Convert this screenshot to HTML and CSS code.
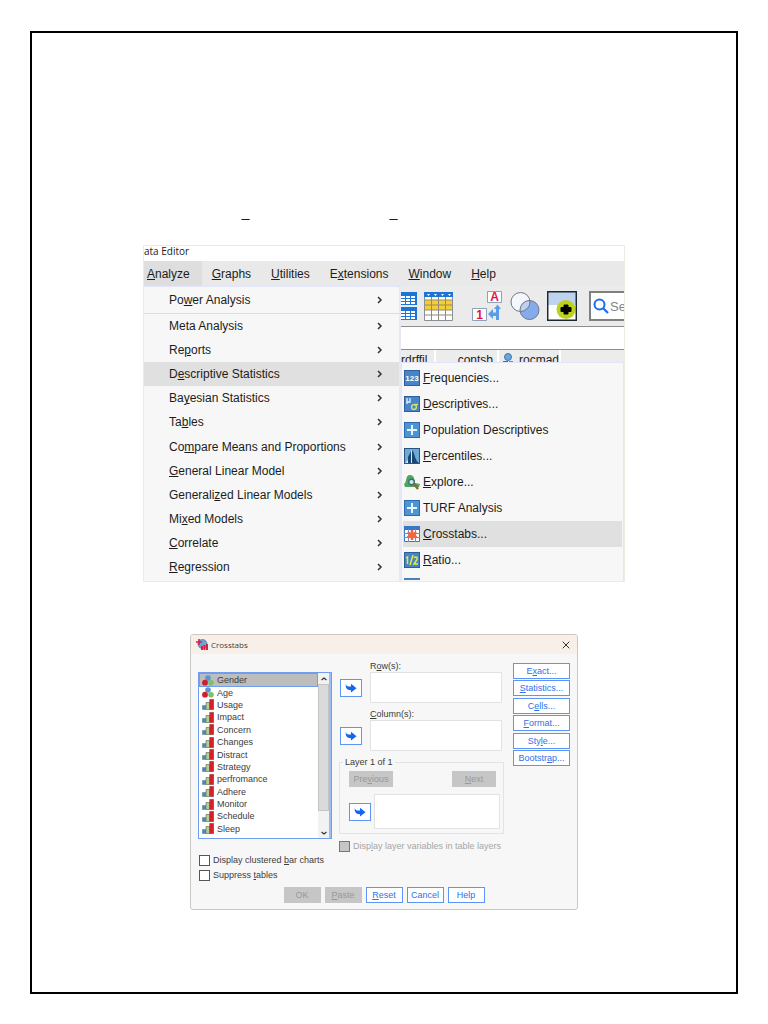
FILE: index.html
```html
<!DOCTYPE html>
<html lang="en">
<head>
<meta charset="utf-8">
<meta name="viewport" content="width=device-width, initial-scale=1">
<title>Crosstabs</title>
<link rel="stylesheet" href="styles.css">
</head>
<body>
<svg class="defs" aria-hidden="true">
  <symbol id="chev" viewBox="0 0 8 8"><path d="M2 1l3 3-3 3" fill="none" stroke="#333" stroke-width="1.5"/></symbol>
  <symbol id="plus" viewBox="0 0 16 16"><rect x=".5" y=".5" width="15" height="15" fill="#4c94d4" stroke="#2d69ae"/><path d="M8 3v10M3 8h10" stroke="#e4f4ff" stroke-width="2"/></symbol>
  <symbol id="nominal" viewBox="0 0 12 11"><circle cx="6" cy="3" r="2.8" fill="#5b94d6"/><circle cx="3" cy="7.7" r="2.9" fill="#cf1d2c"/><circle cx="9" cy="7.7" r="2.8" fill="#7fbf68"/></symbol>
  <symbol id="ordinal" viewBox="0 0 12 11"><path d="M.3 6.500h3.700v4H.3z" fill="#4f87b8" stroke="#6c8799" stroke-width=".6"/><path d="M4 3.500h3.500v7H4z" fill="#b4cf98" stroke="#5f7a5f" stroke-width=".7"/><path d="M7.700.5h4v10h-4z" fill="#d91f28" stroke="#8f3034" stroke-width=".6"/></symbol>
  <symbol id="move" viewBox="0 0 12 10"><path d="M.8.800c.2 2.200 1.500 2.900 5.200 2.800V.8L11.500 5.300 6 9.600V7.200C2.200 7.400.2 5 .8.800z" fill="#1265f5"/></symbol>
</svg>
<main class="page">
  <p class="marks"><span>_</span><span>_</span></p>

  <section class="editor">
    <div class="caption">ata Editor</div>
    <nav class="menubar">
      <button class="on"><u>A</u>nalyze</button><button><u>G</u>raphs</button><button><u>U</u>tilities</button><button>E<u>x</u>tensions</button><button><u>W</u>indow</button><button><u>H</u>elp</button>
    </nav>
    <div class="work">
      <div class="menu">
        <button class="first"><span>Po<u>w</u>er Analysis</span><svg><use href="#chev"/></svg></button>
        <button><span>Meta Analysis</span><svg><use href="#chev"/></svg></button>
        <button><span>Re<u>p</u>orts</span><svg><use href="#chev"/></svg></button>
        <button class="on"><span>D<u>e</u>scriptive Statistics</span><svg><use href="#chev"/></svg></button>
        <button><span>Ba<u>y</u>esian Statistics</span><svg><use href="#chev"/></svg></button>
        <button><span>Ta<u>b</u>les</span><svg><use href="#chev"/></svg></button>
        <button><span>Co<u>m</u>pare Means and Proportions</span><svg><use href="#chev"/></svg></button>
        <button><span><u>G</u>eneral Linear Model</span><svg><use href="#chev"/></svg></button>
        <button><span>Generali<u>z</u>ed Linear Models</span><svg><use href="#chev"/></svg></button>
        <button><span>Mi<u>x</u>ed Models</span><svg><use href="#chev"/></svg></button>
        <button><span><u>C</u>orrelate</span><svg><use href="#chev"/></svg></button>
        <button><span><u>R</u>egression</span><svg><use href="#chev"/></svg></button>
      </div>
      <div class="side">
        <div class="toolbar">
          <svg class="t-split" viewBox="0 0 16 30"><path d="M0 1h16v13H0zM0 16h16v13H0z" fill="#1c74d4"/><path d="M0 5h4v2H0zM5 5h4v2H5zM10 5h4v2h-4zM0 8h4v2H0zM5 8h4v2H5zM10 8h4v2h-4zM0 11h4v2H0zM5 11h4v2H5zM10 11h4v2h-4zM0 20h4v2H0zM5 20h4v2H5zM10 20h4v2h-4zM0 23h4v2H0zM5 23h4v2H5zM10 23h4v2h-4zM0 26h4v2H0zM5 26h4v2H5zM10 26h4v2h-4z" fill="#fff"/></svg>
          <svg class="t-table" viewBox="0 0 29 30"><path d="M.5 1.500h28v28H.5z" fill="#fff" stroke="#8a8f96"/><path d="M0 1h29v5H0z" fill="#1c74d4"/><path d="M1 9h27v10H1z" fill="#f7ce2e"/><path d="M1 9h27M1 14h27M1 19h27M1 24h27M7.500 6v23M14.500 6v23M21.500 6v23" stroke="#8d8b7d" stroke-width="1"/><path d="M3 3h3l-1.500 2zM10 3h3l-1.500 2zM17 3h3l-1.500 2zM24 3h3l-1.500 2z" fill="#fff"/></svg>
          <svg class="t-label" viewBox="0 0 30 30"><path d="M15.500.5h14v11h-14zM.5 17.500h14v12H.5z" fill="#fff" stroke="#8ba2b8"/><text x="22.500" y="10" text-anchor="middle">A</text><text x="7.500" y="27.500" text-anchor="middle">1</text><path d="M16 23l5-5v3.500h3V18h-2l3.500-4.500L29 18h-2v11h-3v-4h-3v3z" fill="#5a9de6"/></svg>
          <svg class="t-venn" viewBox="0 0 30 28"><circle cx="10.500" cy="10" r="9.500" fill="#f5f7fc"/><circle cx="19.500" cy="18" r="9.500" fill="#86abeb"/><path d="M10.500 19.500A9.500 9.500 0 0 0 19.500 8.500 9.500 9.500 0 0 0 10.500 19.500z" fill="#bfd0ec"/><g fill="none" stroke="#6d7889"><circle cx="10.500" cy="10" r="9.500"/><circle cx="19.500" cy="18" r="9.500"/></g></svg>
          <svg class="t-add" viewBox="0 0 30 30"><path d="M1 1h28v28H1z" fill="#fff"/><path d="M1 1h28v13H1z" fill="#bdd3ee"/><circle cx="19" cy="18.500" r="9.500" fill="#bdd21e"/><path d="M17 14h4v2.500h3v4h-3V23h-4v-2.500h-3v-4h3z" fill="#000" stroke="#000" stroke-linejoin="round"/><path d="M.7.700h28.600v28.600H.7z" fill="none" stroke="#1d2733" stroke-width="1.500"/></svg>
          <label class="search"><svg viewBox="0 0 16 16"><circle cx="6.500" cy="6.500" r="5" fill="none" stroke="#1f6bf0" stroke-width="2"/><path d="M10 10l5 5" stroke="#1f6bf0" stroke-width="2.200"/></svg><input type="text" placeholder="Se" aria-label="Search"></label>
        </div>
        <div class="cellbar"></div>
        <div class="heads"><span class="h1">rdrffil</span><span class="h2">contsb</span><span class="h3"><svg viewBox="0 0 12 11"><circle cx="6" cy="4" r="3.500" fill="#6aa7dc" stroke="#3f78ad"/><path d="M1 8h5v3H1z" fill="#b8405a"/><path d="M7 8h4v3H7z" fill="#62a85a"/></svg>rocmad</span></div>
        <div class="submenu">
          <button><svg viewBox="0 0 16 16"><rect x=".5" y=".5" width="15" height="15" fill="#4784c8" stroke="#2d5f9e"/><text x="8" y="11" text-anchor="middle" class="i123">123</text></svg><span><u>F</u>requencies...</span></button>
          <button><svg viewBox="0 0 16 16"><rect x=".5" y=".5" width="15" height="15" fill="#4784c8" stroke="#2d5f9e"/><path d="M3 2v6M3 6h3V2" fill="none" stroke="#e4f2ff" stroke-width="1.300"/><circle cx="10" cy="11" r="2.400" fill="none" stroke="#d4e45c" stroke-width="1.400"/><path d="M10 8.500h4" stroke="#d4e45c" stroke-width="1.400"/></svg><span><u>D</u>escriptives...</span></button>
          <button><svg><use href="#plus"/></svg><span>Population Descriptives</span></button>
          <button><svg viewBox="0 0 16 16"><rect x=".5" y=".5" width="15" height="15" fill="#6eaad8" stroke="#2b5280"/><path d="M1 15c4-1 4-11 7-13v13z" fill="#d6ebfa"/><path d="M4 15V9l3-6v12zM8 2c3 3 3 11 7 13H8z" fill="#1a4778"/></svg><span><u>P</u>ercentiles...</span></button>
          <button><svg viewBox="0 0 16 16"><path d="M0 10c3-1 1-9 6-9 5 0 4 6 5 8l5 1-1 3H1z" fill="#4da65b"/><circle cx="7.500" cy="8" r="2.800" fill="#d3e9ed" stroke="#397078" stroke-width="1.400"/><path d="M10 10l4 5" stroke="#94643a" stroke-width="2.500"/></svg><span><u>E</u>xplore...</span></button>
          <button><svg><use href="#plus"/></svg><span>TURF Analysis</span></button>
          <button class="on"><svg viewBox="0 0 16 16"><path d="M.5.500h15v15H.5z" fill="#fff" stroke="#3478c6"/><path d="M0 0h16v4H0z" fill="#3478c6"/><path d="M0 7.500h16M0 11.500h16M4.500 3v13M11.500 3v13" stroke="#5a94d4"/><path d="M8 4v10M3.500 6.500l9 5M3.500 11.500l9-5" stroke="#ef6744" stroke-width="2.600"/></svg><span><u>C</u>rosstabs...</span></button>
          <button><svg viewBox="0 0 16 16"><rect x=".5" y=".5" width="15" height="15" fill="#4784c8" stroke="#2d5f9e"/><path d="M2 6l1.500-1v7M9 3l-3 10M10 6c2-2 4-.5 3 1.500L10 12h4" fill="none" stroke="#e4ec36" stroke-width="1.500"/></svg><span><u>R</u>atio...</span></button>
          <i class="peek"></i>
        </div>
      </div>
    </div>
  </section>

  <section class="dialog">
    <header class="titlebar">
      <svg class="logo" viewBox="0 0 12 11"><circle cx="6.500" cy="5" r="4.500" fill="#6ea4d4" stroke="#4778a8" stroke-width=".7"/><path d="M3 0v6M0 3h6" stroke="#d32246" stroke-width="1.600"/><path d="M5 11V7h2v4zM7.500 11V6h2v5zM10 11V5h2v6z" fill="#d32246"/></svg>
      <h1>Crosstabs</h1>
      <button class="close" aria-label="Close"><svg viewBox="0 0 8 8"><path d="M.7.700l6.600 6.600M7.300.700L.7 7.300" stroke="#333" stroke-width="1"/></svg></button>
    </header>
    <div class="cols">
      <div class="left">
        <div class="list">
          <ul>
            <li class="sel"><svg><use href="#nominal"/></svg>Gender</li>
            <li><svg><use href="#nominal"/></svg>Age</li>
            <li><svg><use href="#ordinal"/></svg>Usage</li>
            <li><svg><use href="#ordinal"/></svg>Impact</li>
            <li><svg><use href="#ordinal"/></svg>Concern</li>
            <li><svg><use href="#ordinal"/></svg>Changes</li>
            <li><svg><use href="#ordinal"/></svg>Distract</li>
            <li><svg><use href="#ordinal"/></svg>Strategy</li>
            <li><svg><use href="#ordinal"/></svg>perfromance</li>
            <li><svg><use href="#ordinal"/></svg>Adhere</li>
            <li><svg><use href="#ordinal"/></svg>Monitor</li>
            <li><svg><use href="#ordinal"/></svg>Schedule</li>
            <li><svg><use href="#ordinal"/></svg>Sleep</li>
          </ul>
          <div class="scroll">
            <button aria-label="Scroll up"><svg viewBox="0 0 8 6"><path d="M1.500 4L4 2l2.500 2" fill="none" stroke="#333" stroke-width="1.200"/></svg></button>
            <div class="thumb"></div>
            <button aria-label="Scroll down"><svg viewBox="0 0 8 6"><path d="M1.500 2L4 4l2.500-2" fill="none" stroke="#333" stroke-width="1.200"/></svg></button>
          </div>
        </div>
        <label class="check"><input type="checkbox"><span>Display clustered <u>b</u>ar charts</span></label>
        <label class="check"><input type="checkbox"><span>Suppress <u>t</u>ables</span></label>
      </div>
      <div class="mid">
        <div class="pick">
          <button class="arrow" aria-label="Move to rows"><svg><use href="#move"/></svg></button>
          <div class="field"><label for="rows">R<u>o</u>w(s):</label><textarea id="rows"></textarea></div>
        </div>
        <div class="pick">
          <button class="arrow" aria-label="Move to columns"><svg><use href="#move"/></svg></button>
          <div class="field"><label for="columns"><u>C</u>olumn(s):</label><textarea id="columns"></textarea></div>
        </div>
        <fieldset>
          <legend>Layer 1 of 1</legend>
          <div class="steps"><button class="btn" disabled>Pre<u>v</u>ious</button><button class="btn" disabled><u>N</u>ext</button></div>
          <div class="layer"><button class="arrow" aria-label="Move to layer"><svg><use href="#move"/></svg></button><textarea aria-label="Layer"></textarea></div>
        </fieldset>
        <label class="check off"><input type="checkbox" disabled><span>Disp<u>l</u>ay layer variables in table layers</span></label>
      </div>
      <div class="right">
        <button class="btn">E<u>x</u>act...</button>
        <button class="btn"><u>S</u>tatistics...</button>
        <button class="btn">C<u>e</u>lls...</button>
        <button class="btn"><u>F</u>ormat...</button>
        <button class="btn">Sty<u>l</u>e...</button>
        <button class="btn">Bootstr<u>a</u>p...</button>
      </div>
    </div>
    <footer class="actions">
      <button class="btn" disabled>OK</button><button class="btn" disabled><u>P</u>aste</button><button class="btn"><u>R</u>eset</button><button class="btn">Cancel</button><button class="btn">Help</button>
    </footer>
  </section>
</main>
</body>
</html>
```
FILE: styles.css
```css
* { box-sizing: border-box; }
body { margin: 0; padding: 31px 30px; background: #fff; font-family: "Liberation Sans", Arial, sans-serif; color: #1c1c1c; }
button { font: inherit; color: inherit; border: 0; padding: 0; background: none; }
svg { display: block; flex: none; }
.defs { position: absolute; width: 0; height: 0; }
.page { border: 2px solid #000; min-height: calc(100vh - 62px); display: flex; flex-direction: column; align-items: center; padding: 164px 16px 82px; }

.marks { margin: 0; height: 48px; display: flex; gap: 140px; padding-right: 129px; font-size: 16px; line-height: 32px; font-family: "Liberation Serif", serif; }

.editor { width: 100%; max-width: 482px; border: 1px solid #eeece2; font-size: 12px; overflow: hidden; }
.caption { height: 15px; line-height: 10px; font-family: "Open Sans", sans-serif; font-size: 10px; }
.menubar { display: flex; background: #e9e9e9; height: 25px; }
.menubar button { padding: 0 10px; }
.menubar .on { background: #dedede; padding: 0 12px 0 3px; }
.work { display: grid; grid-template-columns: 257px 1fr; height: 295px; }
.menu { background: #f7f7f7; border-top: 1px solid #e3e6fa; border-right: 2px solid #e6e8f8; display: flex; flex-direction: column; padding-bottom: 2px; }
.menu button { flex: 1; display: flex; align-items: center; justify-content: space-between; padding: 0 15px 0 25px; line-height: 16px; min-height: 0; }
.menu .first { flex: none; height: 27px; border-bottom: 1px solid #dcdcdc; }
.menu .on, .submenu .on { background: #e0e0e0; }
.menu svg { width: 8px; height: 8px; }

.side { display: flex; flex-direction: column; min-width: 0; }
.toolbar { background: #ebebeb; height: 41px; display: flex; align-items: center; border-bottom: 1px solid #8d8d8d; overflow: hidden; }
.t-split { width: 16px; height: 30px; }
.t-table { width: 29px; height: 30px; margin-left: 7px; }
.t-label { width: 30px; height: 30px; margin-left: 19px; font: bold 12px "Liberation Sans", sans-serif; fill: #e3124b; }
.t-venn { width: 30px; height: 28px; margin-left: 8px; }
.t-add { width: 30px; height: 30px; margin-left: 7px; }
.search { flex: 1; min-width: 0; height: 30px; margin-left: 12px; border: 2px solid #808080; border-right: 0; background: #fff; display: flex; align-items: center; padding-left: 2px; gap: 1px; overflow: hidden; }
.search svg { width: 16px; height: 16px; }
.search input { border: 0; padding: 0; width: 24px; font: 13px "Liberation Sans", sans-serif; outline: 0; background: none; }
.search input::placeholder { color: #858585; opacity: 1; }
.cellbar { height: 23px; background: #fff; border-bottom: 1px solid #8d8d8d; }
.heads { height: 12px; background: #ececec; display: flex; overflow: hidden; font-size: 12px; line-height: 20px; }
.heads span { border-right: 2px solid #fff; }
.heads .h1 { width: 35px; }
.heads .h2 { width: 63px; text-align: right; padding-right: 4px; }
.heads .h3 { width: 62px; display: flex; gap: 5px; padding-left: 3px; }
.heads svg { width: 12px; height: 11px; margin-top: 3px; }
.submenu { flex: 1; background: #f7f7f7; border: 1px solid #e3e6fa; border-bottom: 0; display: flex; flex-direction: column; padding: 2px 1px 0; }
.submenu button { height: 26px; display: flex; align-items: center; gap: 3px; padding-left: 1px; }
.submenu svg { width: 16px; height: 16px; }
.i123 { font: bold 8px "Liberation Sans", sans-serif; fill: #fff; }
.peek { width: 16px; height: 2px; margin: 5px 0 0 1px; background: #4a7ebc; }

.dialog { width: 100%; max-width: 388px; margin-top: 52px; border: 1px solid #ccc9c5; border-radius: 3px; background: #f7f7f7; font-size: 9px; line-height: 12px; color: #3c3c3c; overflow: hidden; }
.titlebar { height: 19px; background: #f8f0e8; display: flex; align-items: center; padding: 0 7px 0 5px; gap: 3px; }
.titlebar h1 { margin: 0; font: 8px/12px "Open Sans", sans-serif; flex: 1; }
.logo { width: 12px; height: 11px; }
.close svg { width: 8px; height: 8px; }
.cols { display: flex; padding: 6px 7px 0; align-items: flex-start; }
.left { width: 134px; padding-top: 12px; display: flex; flex-direction: column; gap: 3px; }
.list { height: 167px; border: 1px solid #6f9df0; background: #fff; display: flex; margin-bottom: 12px; }
.list ul { list-style: none; margin: 0; padding: 1px 1px 3px; flex: 1; display: flex; flex-direction: column; }
.list li { flex: 1; display: flex; align-items: center; gap: 3px; padding-left: 2px; min-height: 0; }
.list li svg { width: 12px; height: 11px; }
.list .sel { background: #bdbdbd; outline: 1px solid #6f9df0; }
.scroll { width: 13px; border-right: 2px solid #9dbdf6; background: #f2f2f2; display: flex; flex-direction: column; }
.scroll button { height: 11px; display: flex; align-items: center; justify-content: center; background: #f2f2f2; }
.scroll svg { width: 8px; height: 6px; }
.thumb { height: 127px; background: #dadada; border: 1px solid #c4c4c4; margin-bottom: auto; }
.check { display: flex; align-items: center; gap: 3px; height: 12px; white-space: nowrap; }
.check input { appearance: none; margin: 0 0 0 1px; width: 11px; height: 11px; border: 1px solid #555; background: #fff; flex: none; }
.off { color: #a6a6a6; }
.off input { background: #c6c6c6; border-color: #777; margin: 0; }
.mid { flex: 1; margin-left: 7px; padding-right: 9px; min-width: 0; }
.pick { display: flex; gap: 8px; padding: 0 2px 0 1px; margin-bottom: 5px; }
.arrow { width: 22px; height: 18px; border: 1px solid #5d95f4; background: #fff; display: flex; align-items: center; justify-content: center; flex: none; }
.arrow svg { width: 12px; height: 10px; }
.pick .arrow { margin-top: 19px; }
.field { flex: 1; display: flex; flex-direction: column; }
textarea { display: block; margin: 0; padding: 0; width: 100%; height: 31px; border: 1px solid #e2e2e2; background: #fff; resize: none; font: inherit; }
fieldset { margin: 0; padding: 3px 3px 4px 9px; border: 1px solid #e3e3e3; min-width: 0; }
legend { margin-left: -6px; padding: 0 2px; line-height: 12px; }
.steps { display: flex; justify-content: space-between; padding-right: 4px; margin-bottom: 7px; }
.steps .btn { width: 44px; }
.layer { display: flex; align-items: center; gap: 3px; }
.layer textarea { height: 35px; }
.mid .off { margin-top: 6px; }
.btn { height: 16px; border: 1px solid #5d95f4; background: #fff; color: #2f70ea; font-size: 9px; line-height: 12px; text-align: center; white-space: nowrap; }
.btn:disabled { background: #c6c6c6; border-color: #c6c6c6; color: #999; }
.right { width: 57px; height: 103px; margin-top: 3px; display: flex; flex-direction: column; justify-content: space-between; }
.actions { display: flex; justify-content: center; gap: 4px; padding: 6px 0 6px; }
.actions .btn { width: 37px; }
```
